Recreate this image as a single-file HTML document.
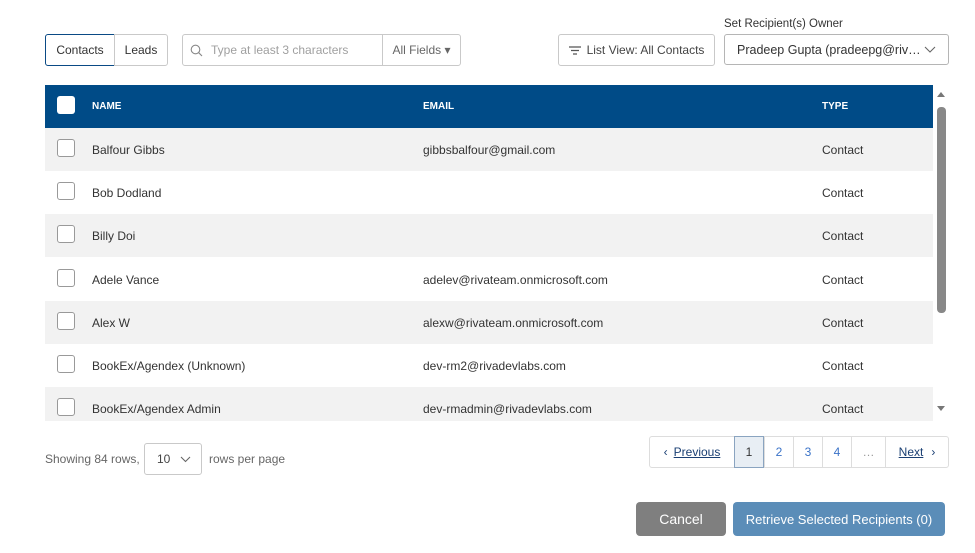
<!DOCTYPE html>
<html><head><style>
*{box-sizing:border-box;margin:0;padding:0}
body{width:975px;height:553px;background:#fff;font-family:"Liberation Sans",sans-serif;color:#333;position:relative;overflow:hidden;font-size:12px}
.abs{position:absolute}
.btn{position:absolute;border:1px solid #c9c9c9;border-radius:3px;background:#fff;display:flex;align-items:center;justify-content:center;font-size:12px;color:#333}
.cb{position:absolute;left:12px;width:18px;height:18px;border:1px solid #999;border-radius:3px;background:#fff}
.row{position:absolute;left:45px;width:888px;height:43px}
.row span{position:absolute;top:15px;font-size:12px;color:#333}
.pg{position:absolute;top:436px;height:32px;border-left:1px solid #ddd;display:flex;align-items:center;justify-content:center;color:#3b73c8;font-size:12px}
</style></head><body>
<div class="btn" style="left:45px;top:34px;width:70px;height:32px;border-color:#0a4a85;border-radius:3px 0 0 3px">Contacts</div>
<div class="btn" style="left:114px;top:34px;width:54px;height:32px;border-radius:0 3px 3px 0">Leads</div>
<div class="btn" style="left:182px;top:34px;width:201px;height:32px;justify-content:flex-start;border-radius:3px 0 0 3px">
<svg style="margin-left:7px" width="13" height="13" viewBox="0 0 13 13"><circle cx="5.5" cy="5.5" r="4.3" fill="none" stroke="#888" stroke-width="1.1"/><path d="M8.7 8.7L12 12" stroke="#888" stroke-width="1.1"/></svg>
<span style="margin-left:8px;color:#a0a0a0">Type at least 3 characters</span></div>
<div class="btn" style="left:382px;top:34px;width:79px;height:32px;border-radius:0 3px 3px 0;color:#666">All Fields ▾</div>
<div class="btn" style="left:558px;top:34px;width:157px;height:32px;color:#444"><svg width="12" height="9" style="margin-right:6px"><path d="M0 1h12M2 4.5h8M4 8h4" stroke="#555" stroke-width="1.2"/></svg>List View: All Contacts</div>
<div class="abs" style="left:724px;top:18px;font-size:11.5px;color:#333">Set Recipient(s) Owner</div>
<div class="btn" style="left:724px;top:34px;width:225px;height:31px;justify-content:flex-start;border-color:#b5b5b5"><span style="margin-left:12px;font-size:12.5px">Pradeep Gupta (pradeepg@riv…</span>
<svg class="abs" style="right:12px;top:11px" width="12" height="8"><path d="M1 1l5 5 5-5" fill="none" stroke="#666" stroke-width="1.1"/></svg></div>

<div class="row" style="top:85px;background:#004b87;">
<div class="cb" style="top:11px;border:none;border-radius:3px"></div>
<span style="left:47px;color:#fff;font-weight:bold;font-size:10px;top:16px">NAME</span>
<span style="left:378px;color:#fff;font-weight:bold;font-size:10px;top:16px">EMAIL</span>
<span style="left:777px;color:#fff;font-weight:bold;font-size:10px;top:16px">TYPE</span>
</div>
<div class="abs" style="left:45px;top:128px;width:888px;height:293px;overflow:hidden">
<div class="row" style="left:0;top:0;background:#f2f2f2"><div class="cb" style="top:11px"></div><span style="left:47px">Balfour Gibbs</span><span style="left:378px">gibbsbalfour@gmail.com</span><span style="left:777px">Contact</span></div>
<div class="row" style="left:0;top:43px;background:#fff"><div class="cb" style="top:11px"></div><span style="left:47px">Bob Dodland</span><span style="left:777px">Contact</span></div>
<div class="row" style="left:0;top:86px;background:#f2f2f2"><div class="cb" style="top:11px"></div><span style="left:47px">Billy Doi</span><span style="left:777px">Contact</span></div>
<div class="row" style="left:0;top:130px;background:#fff"><div class="cb" style="top:11px"></div><span style="left:47px">Adele Vance</span><span style="left:378px">adelev@rivateam.onmicrosoft.com</span><span style="left:777px">Contact</span></div>
<div class="row" style="left:0;top:173px;background:#f2f2f2"><div class="cb" style="top:11px"></div><span style="left:47px">Alex W</span><span style="left:378px">alexw@rivateam.onmicrosoft.com</span><span style="left:777px">Contact</span></div>
<div class="row" style="left:0;top:216px;background:#fff"><div class="cb" style="top:11px"></div><span style="left:47px">BookEx/Agendex (Unknown)</span><span style="left:378px">dev-rm2@rivadevlabs.com</span><span style="left:777px">Contact</span></div>
<div class="row" style="left:0;top:259px;background:#f2f2f2"><div class="cb" style="top:11px"></div><span style="left:47px">BookEx/Agendex Admin</span><span style="left:378px">dev-rmadmin@rivadevlabs.com</span><span style="left:777px">Contact</span></div>
</div>
<svg class="abs" style="left:936px;top:90px" width="10" height="8"><path d="M1 7L5 2 9 7Z" fill="#777"/></svg>
<div class="abs" style="left:937px;top:107px;width:9px;height:206px;background:#888;border-radius:4px"></div>
<svg class="abs" style="left:936px;top:405px" width="10" height="8"><path d="M1 1L5 6 9 1Z" fill="#777"/></svg>

<div class="abs" style="left:45px;top:452px;color:#666;font-size:12px">Showing 84 rows,</div>
<div class="btn" style="left:144px;top:443px;width:58px;height:32px;color:#444;justify-content:flex-start;padding-left:12px">10<svg style="margin-left:10px" width="11" height="7"><path d="M1 1l4.5 4.5L10 1" fill="none" stroke="#666" stroke-width="1.1"/></svg></div>
<div class="abs" style="left:209px;top:452px;color:#666;font-size:12px">rows per page</div>

<div class="abs" style="left:649px;top:436px;width:300px;height:32px;border:1px solid #ddd;border-radius:3px"></div>
<div class="pg" style="left:650px;width:84px;border:none;color:#1a3f73"><span style="margin-right:6px">‹</span><u>Previous</u></div>
<div class="pg" style="left:734px;width:30px;background:#e8eef4;border:1px solid #8aa4c0;color:#333">1</div>
<div class="pg" style="left:764px;width:29px">2</div>
<div class="pg" style="left:793px;width:29px">3</div>
<div class="pg" style="left:822px;width:29px">4</div>
<div class="pg" style="left:851px;width:34px;color:#999">…</div>
<div class="pg" style="left:885px;width:63px;color:#1a3f73"><u>Next</u><span style="margin-left:8px">›</span></div>

<div class="abs" style="left:636px;top:502px;width:90px;height:34px;background:#7f7f7f;border-radius:4px;color:#fff;font-size:14px;display:flex;align-items:center;justify-content:center">Cancel</div>
<div class="abs" style="left:733px;top:502px;width:212px;height:34px;background:#5b8db8;border-radius:4px;color:#fff;font-size:13px;display:flex;align-items:center;justify-content:center">Retrieve Selected Recipients (0)</div>
</body></html>
